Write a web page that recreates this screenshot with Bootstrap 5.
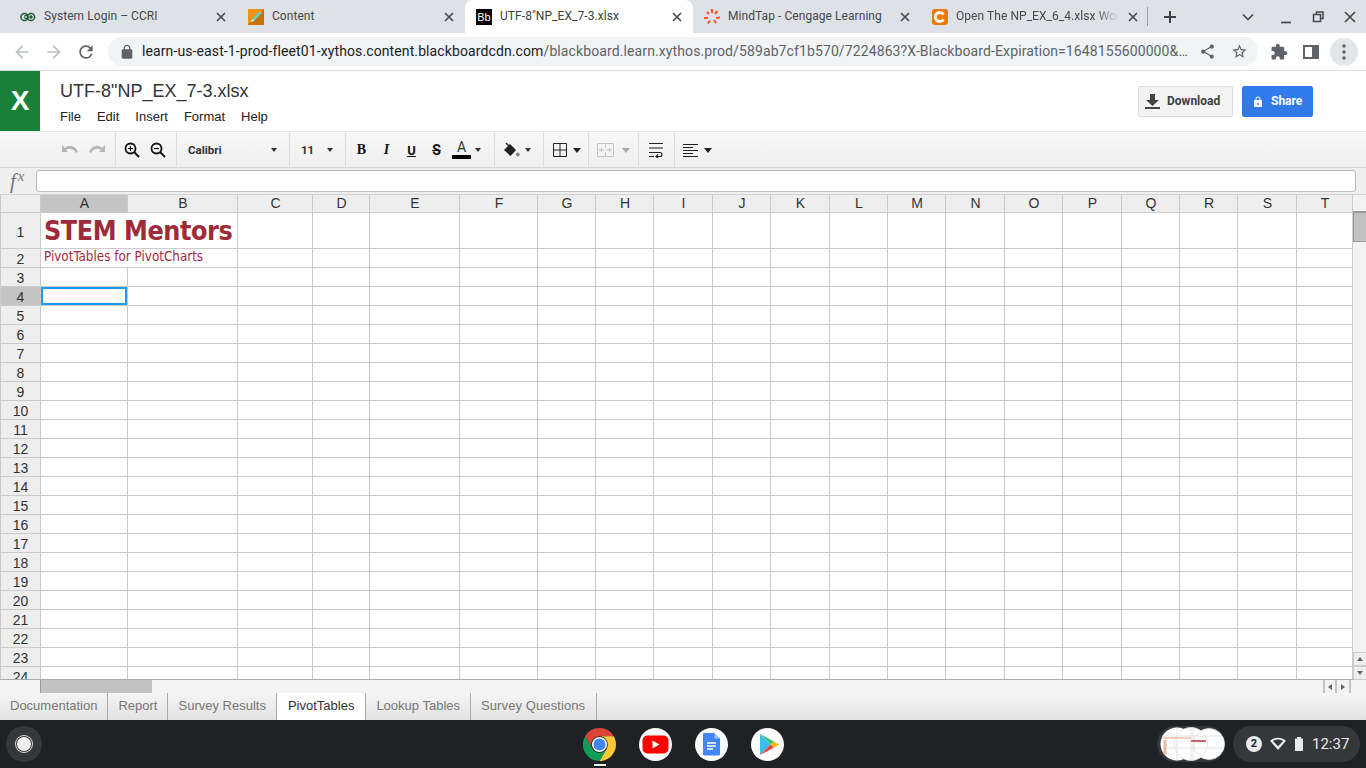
<!DOCTYPE html>
<html lang="en"><head><meta charset="utf-8"><title>UTF-8"NP_EX_7-3.xlsx</title>
<link href="https://cdn.jsdelivr.net/npm/bootstrap@5.3.0/dist/css/bootstrap.min.css" rel="stylesheet">
<style>
html,body{height:768px;overflow:hidden;background:#fff;font-family:"Liberation Sans",Arial,sans-serif}
.tabstrip{height:33px;background:#dee1e6;padding-left:9px;font:12px Roboto,sans-serif;color:#45484d;letter-spacing:.06px}
.ctab{width:228px;height:33px;padding:0 8px 0 11px;gap:8px;position:relative;white-space:nowrap;overflow:hidden}
.ctab+.ctab::before{content:"";position:absolute;left:-1px;top:7px;height:19px;border-left:1px solid #9aa0a6}
.ctab.live{background:#fff;border-radius:8px 8px 0 0;color:#3c4043}
.ctab.live::before,.ctab.live+.ctab::before{display:none}
.ctitle{flex:1;overflow:hidden;white-space:nowrap;padding-bottom:2px}
.fade-tail{-webkit-mask-image:linear-gradient(90deg,#000 85%,transparent)}
.favi{width:16px;height:16px;flex:none;display:block}
.bbi{width:16px;height:16px;flex:none;background:#000;color:#fff;font:11px/16px "Liberation Sans",sans-serif;text-align:center}
.tabx{width:12px;height:12px;flex:none;margin-right:2px}
.winctl{width:217px;height:33px;padding-left:13px;position:relative}
.winctl::before{content:"";position:absolute;left:-2px;top:7px;height:19px;border-left:1px solid #9aa0a6}
.plus{width:16px;height:16px;margin-right:63px}
.wbtn{width:32px;text-align:center;line-height:14px}
.wico{width:14px;height:14px;display:inline-block}
.chev{margin-right:15px}
.addr{height:38px;background:#fff;border-bottom:1px solid #dadce0;padding-left:12px}
.navb{width:20px;height:20px;margin-right:12px;fill:#5f6368}
.navb.off{fill:#bcc0c4}
.omni{width:1150px;height:29px;border-radius:15px;background:#f1f3f4;padding:0 10px 0 11px;font:14px Roboto,sans-serif;color:#202124;white-space:nowrap;overflow:hidden}
.omni .path{color:#5f6368}
.url{flex:1;overflow:hidden;margin-left:7px;letter-spacing:.108px;padding-bottom:2px}
.i16{width:17px;height:17px;flex:none;fill:#5f6368}
.omni .i16+.i16{margin-left:15px}
.lk{width:16px;height:16px;fill:#5f6368;flex:none}
.ext{width:18px;height:18px;fill:#5f6368;margin-left:12px;flex:none}
.ext2{width:18px;height:18px;margin-left:14px;flex:none}
.dotsb{width:28px;height:28px;border-radius:50%;background:#e4e5e6;margin-left:10px;flex:none}
.apphead{height:60px}
.xlogo{width:40px;height:60px;background:#188038;color:#fff;font:bold 28px "Liberation Sans",sans-serif}
.docname{font-size:18px;line-height:22px;color:#333;padding-top:9px;height:34px}
.menus{font-size:13px;line-height:18px;color:#222;gap:16px;padding-top:3px}
.docmain{padding-left:20px;flex:1}
.acts{padding:15px 53px 0 0;gap:9px}
.bdl,.bsh{height:31px;border-radius:2px;font:bold 12px Roboto,sans-serif;padding:0 0 2px;gap:7px}
.bdl svg,.bsh svg{margin-top:2px}
.bdl{width:95px;background:#f3f3f3;border:1px solid #dcdcdc;color:#3c4043;padding-left:5px}
.bdl span{margin-left:-1px}
.bsh{width:71px;background:linear-gradient(#2f7cf0,#3179e4);border:1px solid #2f7bea;color:#fff;padding-left:9px}
.bdl:hover,.bsh:hover{color:inherit}
.tools{height:37px;background:linear-gradient(#f8f8f8,#efefef);border-top:1px solid #e6e6e6;border-bottom:1px solid #d4d4d4;color:#222}
.tg{height:36px;border-right:1px solid #dcdcdc;flex:none;position:relative}
.tg svg{display:block;flex:none}
.g1{width:116px;padding-left:62px;gap:11px}.g2{width:61px;padding-left:8px;gap:10px}
.g3{width:113px;padding:0 12px 0 11px;font:bold 11.5px Roboto,sans-serif;color:#333}
.g4{width:56px;padding:0 12px 0 11px;font:bold 11.5px Roboto,sans-serif;color:#333}
.g5{width:149px;padding-left:3px;gap:0}.g6{width:49px;padding-left:8px;gap:5px}
.g7{width:45px;padding-left:9px;gap:6px}.g8{width:50px;padding-left:8px;gap:8px}
.g9{width:36px;padding-left:9px}.g10{width:52px;padding-left:8px;gap:6px;border-right:0}
.fm{width:25px;text-align:center;font-size:14px;line-height:20px;color:#111}
.fb{font:bold 14px "Liberation Serif",serif}.fi{font:italic bold 14px "Liberation Serif",serif}
.fu{text-decoration:underline;font:bold 13px Roboto,sans-serif}.fs{text-decoration:line-through;font:bold 14px Roboto,sans-serif}
.fa{width:19px;font:14px/13px Roboto,sans-serif;border-bottom:4px solid #000;color:#333;text-align:center;height:18px;margin-left:3px}
.caret1{width:0;height:0;border:3px solid transparent;border-top:4px solid #333;border-bottom:0;flex:none}
.caret2{width:0;height:0;border:4px solid transparent;border-top:5px solid #222;border-bottom:0;flex:none}
.caret3{border-top-color:#aaa}
.g5 .caret1{margin-left:4px}
.formula{height:27px;background:#efefef;padding:2px 10px 3px 0;border-bottom:1px solid #d4d4d4}
.fx{width:36px;padding-left:10px;font:italic 21px/20px "Liberation Serif",serif;color:#777;white-space:nowrap}
.fx sup{font-size:15px;top:-.42em;vertical-align:baseline;position:relative;margin-left:2px}
.fbox{flex:1;height:22px;background:#fff;border:1px solid #bbb;border-radius:3px}
.sheetarea{height:485px;overflow:hidden}
.gridwrap{width:1353px;height:485px;overflow:hidden;flex:none;border-bottom:1px solid #aaa}
.sheet{table-layout:fixed;width:1353px;border-collapse:separate;border-spacing:0;font:14px "Liberation Sans",sans-serif;color:#333}
.sheet td,.sheet th{height:19px;padding:0;border-right:1px solid #cbcbcb;border-bottom:1px solid #cbcbcb;background:#fff;font-weight:400;line-height:17px;text-align:center;overflow:hidden;white-space:nowrap}
.sheet thead th{height:18px;background:#eee;padding-left:1px}
.sheet tbody th{background:#eee;padding-top:2px;line-height:16px}
.sheet tr>th:first-child{border-left:1px solid #cbcbcb}
.sheet .cursel{background:#c4c4c4}
.sheet .r1>*{height:36px}
.sheet td.ttl{text-align:left;padding:1px 0 0 3px;font:bold 26.67px "DejaVu Sans Condensed","DejaVu Sans",sans-serif;letter-spacing:-.43px;color:#9e2b3a;line-height:34px}
.sheet td.sub{text-align:left;padding:0 0 2px 3px;font:13.33px "DejaVu Sans Condensed","DejaVu Sans",sans-serif;color:#a52a3e;line-height:16px}
.sheet td.active{box-shadow:inset 0 0 0 2px #1a9bf0}
.vbar{flex:1;background:#f3f3f3;height:485px}
.vhead{height:16px}
.vthumb{height:31px;background:#c2c2c2;border:1px solid #999;border-top-width:2px;border-right:0}
.vbtn{height:14px;background:#eee;border:1px solid #ccc;border-right:0}
.vup{margin-top:-1px}
.hbar{height:13px;background:#f3f3f3;padding-left:40px}
.hthumb{width:112px;height:13px;background:#c2c2c2;border-left:1px solid #999}
.hbtn{width:14px;height:13px;border-left:2px solid #c4c4c4;border-right:2px solid #c4c4c4;margin-right:0}
.hbtn+.hbtn{border-left:0;margin-left:0}
.hbtns{margin:0 15px 0 auto}
.tri{width:0;height:0;border:3px solid transparent}
.tl{border-right:4px solid #666;border-left:0}.tr{border-left:4px solid #666;border-right:0}
.tu{border-bottom:4px solid #666;border-top:0}.td{border-top:4px solid #666;border-bottom:0}
.sheets{height:27px;background:linear-gradient(#f5f5f5,#e2e2e2);font-size:13px;color:#777}
.stab{padding:0 10px;height:27px;line-height:25px;border-right:1px solid #aaa;white-space:nowrap}
.stab.on{background:#fff;color:#333;padding:0 11px}
.stab:last-child{letter-spacing:.1px;padding-right:11px}
.shelf{height:48px;background:#202124;position:relative}
.launch{width:36px;height:36px;border-radius:50%;background:#36373a;margin-left:6px}
.launchin{width:14px;height:14px;border-radius:50%;background:#eee;box-shadow:0 0 0 1px #36373a,0 0 0 2px #ddd}
.apps{position:absolute;left:583px;top:8px;gap:23px}
.appi{width:33px;height:33px;display:block;flex:none}
.runline{position:absolute;left:594px;top:44px;width:12px;height:2px;background:#e8eaed}
.thumbs{position:absolute;left:1157px;top:6px;width:68px;height:36px;border-radius:18px;background:#36373a}
.thumbs svg{display:block}
.status{position:absolute;left:1233px;top:6px;width:127px;height:36px;border-radius:18px;background:#36373a;color:#e8eaed;font:15px Roboto,sans-serif;padding-left:13px}
.nbadge{width:16px;height:16px;border-radius:50%;background:#e8eaed;color:#202124;font:bold 11px/16px Roboto,sans-serif;text-align:center}
.wifi{width:16px;height:16px;margin-left:8px;fill:#e8eaed}
.batt{width:16px;height:16px;margin-left:5px;fill:#e8eaed}
.clock{margin-left:5px}
</style></head>
<body class="d-flex flex-column">

<div class="tabstrip d-flex align-items-center">
 <div class="ctab d-flex align-items-center">
  <svg class="favi" viewBox="0 0 16 16" fill="none" stroke="#1f5c36" stroke-width="1.5"><circle cx="4.500" cy="8" r="3.600"/><circle cx="11" cy="8" r="3.600"/><circle cx="11" cy="8" r="1" fill="#1f5c36"/><path d="M7.800 6.500h-3v3h3" stroke-width="1"/></svg>
  <span class="ctitle">System Login – CCRI</span>
  <svg class="tabx" viewBox="0 0 12 12" stroke="#45484d" stroke-width="1.6"><path d="M2 2l8 8M10 2l-8 8"/></svg>
 </div>
 <div class="ctab d-flex align-items-center">
  <svg class="favi" viewBox="0 0 16 16"><rect width="16" height="16" fill="#f0930f"/><path d="M0 16L16 0v16z" fill="#c96f0a"/><path d="M3 13l1-3 7-7 2 2-7 7z" fill="#5fd3c6"/><path d="M3 13l1-3 2 2z" fill="#fbe7b5"/><path d="M11 3l1-1 2 2-1 1z" fill="#f39ab1"/></svg>
  <span class="ctitle">Content</span>
  <svg class="tabx" viewBox="0 0 12 12" stroke="#45484d" stroke-width="1.6"><path d="M2 2l8 8M10 2l-8 8"/></svg>
 </div>
 <div class="ctab live d-flex align-items-center">
  <span class="bbi">Bb</span>
  <span class="ctitle">UTF-8"NP_EX_7-3.xlsx</span>
  <svg class="tabx" viewBox="0 0 12 12" stroke="#45484d" stroke-width="1.6"><path d="M2 2l8 8M10 2l-8 8"/></svg>
 </div>
 <div class="ctab d-flex align-items-center">
  <svg class="favi" viewBox="0 0 16 16" fill="none" stroke="#ee5a33" stroke-width="2.2"><path d="M8 0v4M13.500 2L11 5M16 8.500l-4 .5M12 14l-2-3M4 14.500l2-3M0 9h4M3 3l2 2"/></svg>
  <span class="ctitle">MindTap - Cengage Learning</span>
  <svg class="tabx" viewBox="0 0 12 12" stroke="#45484d" stroke-width="1.6"><path d="M2 2l8 8M10 2l-8 8"/></svg>
 </div>
 <div class="ctab d-flex align-items-center">
  <svg class="favi" viewBox="0 0 16 16"><rect width="16" height="16" rx="3" fill="#ee7a06"/><path d="M11.500 10.500A4.500 4.500 0 1 1 11.500 5.500" fill="none" stroke="#fff" stroke-width="2.800"/></svg>
  <span class="ctitle fade-tail">Open The NP_EX_6_4.xlsx Work</span>
  <svg class="tabx" viewBox="0 0 12 12" stroke="#45484d" stroke-width="1.6"><path d="M2 2l8 8M10 2l-8 8"/></svg>
 </div>
 <div class="winctl d-flex align-items-center">
  <svg class="plus" viewBox="0 0 16 16" stroke="#3c4043" stroke-width="2"><path d="M8 2v12M2 8h12"/></svg>
  <svg class="wico chev" viewBox="0 0 14 14" fill="none" stroke="#45484d" stroke-width="1.700"><path d="M2 4.500l5 5 5-5"/></svg>
  <span class="wbtn"><svg class="wico" viewBox="0 0 14 14" stroke="#45484d" stroke-width="1.700"><path d="M2 12.500h10"/></svg></span>
  <span class="wbtn"><svg class="wico" viewBox="0 0 14 14" fill="none" stroke="#45484d" stroke-width="1.500"><path d="M5.500 4V2h6.500v6.500H9.500"/><rect x="2.500" y="4.500" width="7" height="7"/></svg></span>
  <span class="wbtn"><svg class="wico" viewBox="0 0 14 14" stroke="#45484d" stroke-width="1.700"><path d="M2 2l10 10M12 2L2 12"/></svg></span>
 </div>
</div>

<div class="addr d-flex align-items-center">
 <svg class="navb off" viewBox="0 0 24 24"><path d="M20 11H7.830l5.590-5.590L12 4l-8 8 8 8 1.410-1.410L7.830 13H20v-2z"/></svg>
 <svg class="navb off" viewBox="0 0 24 24"><path d="M4 11h12.170l-5.590-5.590L12 4l8 8-8 8-1.410-1.410L16.170 13H4v-2z"/></svg>
 <svg class="navb" viewBox="0 0 24 24"><path d="M17.650 6.350A7.958 7.958 0 0 0 12 4c-4.420 0-7.990 3.580-7.990 8s3.570 8 7.990 8c3.730 0 6.840-2.550 7.730-6h-2.080A5.990 5.990 0 0 1 12 18c-3.310 0-6-2.690-6-6s2.690-6 6-6c1.660 0 3.140.690 4.220 1.780L13 11h7V4l-2.350 2.350z"/></svg>
 <div class="omni d-flex align-items-center">
  <svg class="lk" viewBox="0 0 24 24"><path d="M18 8h-1V6c0-2.760-2.240-5-5-5S7 3.240 7 6v2H6c-1.100 0-2 .9-2 2v10c0 1.100.9 2 2 2h12c1.100 0 2-.9 2-2V10c0-1.100-.9-2-2-2zM9 6c0-1.660 1.340-3 3-3s3 1.340 3 3v2H9V6z"/></svg>
  <span class="url">learn-us-east-1-prod-fleet01-xythos.content.blackboardcdn.com<span class="path">/blackboard.learn.xythos.prod/589ab7cf1b570/7224863?X-Blackboard-Expiration=1648155600000&amp;…</span></span>
  <svg class="i16" viewBox="0 0 24 24"><path d="M18 16.080c-.760 0-1.440.3-1.960.770L8.910 12.700c.05-.23.09-.46.09-.7s-.04-.47-.09-.7l7.050-4.110c.54.5 1.250.810 2.040.810 1.660 0 3-1.340 3-3s-1.340-3-3-3-3 1.340-3 3c0 .24.04.47.09.7L8.040 9.810C7.500 9.310 6.790 9 6 9c-1.660 0-3 1.340-3 3s1.340 3 3 3c.79 0 1.500-.31 2.040-.81l7.120 4.160c-.05.21-.08.43-.08.65 0 1.610 1.310 2.920 2.920 2.920s2.920-1.310 2.920-2.920-1.310-2.920-2.920-2.920z"/></svg>
  <svg class="i16" viewBox="0 0 24 24"><path d="M22 9.240l-7.190-.62L12 2 9.190 8.630 2 9.240l5.460 4.730L5.820 21 12 17.270 18.180 21l-1.630-7.030L22 9.240zM12 15.400l-3.760 2.270 1-4.280-3.320-2.880 4.380-.38L12 6.100l1.710 4.040 4.380.38-3.320 2.880 1 4.280L12 15.400z"/></svg>
 </div>
 <svg class="ext" viewBox="0 0 24 24"><path d="M20.500 11H19V7c0-1.100-.9-2-2-2h-4V3.500C13 2.120 11.880 1 10.500 1S8 2.120 8 3.500V5H4c-1.100 0-1.990.9-1.990 2v3.800H3.500c1.490 0 2.700 1.210 2.700 2.700s-1.210 2.700-2.700 2.700H2V20c0 1.100.9 2 2 2h3.800v-1.500c0-1.490 1.210-2.700 2.700-2.700 1.490 0 2.700 1.210 2.700 2.700V22H17c1.100 0 2-.9 2-2v-4h1.500c1.380 0 2.500-1.120 2.500-2.500S21.880 11 20.500 11z"/></svg>
 <svg class="ext2" viewBox="0 0 18 18"><path d="M2 3h14v12H2z" fill="none" stroke="#5f6368" stroke-width="2"/><path d="M10 3h6v12h-6z" fill="#5f6368"/></svg>
 <div class="dotsb d-flex align-items-center justify-content-center"><svg width="4" height="16" viewBox="0 0 4 16" fill="#5f6368"><circle cx="2" cy="2" r="1.700"/><circle cx="2" cy="8" r="1.700"/><circle cx="2" cy="14" r="1.700"/></svg></div>
</div>

<div class="apphead d-flex">
 <div class="xlogo d-flex align-items-center justify-content-center">X</div>
 <div class="docmain">
  <div class="docname">UTF-8"NP_EX_7-3.xlsx</div>
  <div class="menus d-flex"><span>File</span><span>Edit</span><span>Insert</span><span>Format</span><span>Help</span></div>
 </div>
 <div class="acts d-flex align-items-start">
  <button class="btn bdl d-flex align-items-center justify-content-start"><svg width="17" height="15" viewBox="0 0 17 15" fill="#444"><path d="M6 0h5v6h4l-6.500 6L2 6h4zM1 13h15v2H1z"/></svg><span>Download</span></button>
  <button class="btn bsh d-flex align-items-center justify-content-start"><svg width="12" height="14" viewBox="0 0 24 24" fill="#fff"><path d="M18 8h-1V6c0-2.760-2.240-5-5-5S7 3.240 7 6v2H6c-1.100 0-2 .9-2 2v10c0 1.100.9 2 2 2h12c1.100 0 2-.9 2-2V10c0-1.100-.9-2-2-2zM9 6c0-1.660 1.340-3 3-3s3 1.340 3 3v2H9V6zm3 12a2 2 0 1 1 0-4 2 2 0 0 1 0 4z"/></svg>Share</button>
 </div>
</div>

<div class="tools d-flex">
 <div class="tg g1 d-flex align-items-center">
  <svg width="16" height="10" viewBox="0 0 16 10" fill="#b5b5b5"><path d="M0 0v7h6L4 5c3-2 7-2 10 3l2-1C13 0 7-1 3 3z"/></svg>
  <svg width="16" height="10" viewBox="0 0 16 10" fill="#b5b5b5"><path d="M16 0v7h-6l2-2C9 3 5 3 2 8L0 7c3-7 9-8 13-4z"/></svg>
 </div>
 <div class="tg g2 d-flex align-items-center">
  <svg width="16" height="16" viewBox="0 0 16 16" fill="none" stroke="#111" stroke-width="1.800"><circle cx="6.500" cy="6.500" r="5"/><path d="M10 10l5 5"/><path d="M4 6.500h5M6.500 4v5" stroke-width="1.200"/></svg>
  <svg width="16" height="16" viewBox="0 0 16 16" fill="none" stroke="#111" stroke-width="1.800"><circle cx="6.500" cy="6.500" r="5"/><path d="M10 10l5 5"/><path d="M4 6.500h5" stroke-width="1.200"/></svg>
 </div>
 <div class="tg g3 d-flex align-items-center justify-content-between"><span>Calibri</span><i class="caret1"></i></div>
 <div class="tg g4 d-flex align-items-center justify-content-between"><span>11</span><i class="caret1"></i></div>
 <div class="tg g5 d-flex align-items-center">
  <span class="fm fb">B</span><span class="fm fi">I</span><span class="fm fu">U</span><span class="fm fs">S</span><span class="fa">A</span><i class="caret1"></i>
 </div>
 <div class="tg g6 d-flex align-items-center">
  <svg width="17" height="16" viewBox="0 0 17 16"><path d="M7 2l6 6-5.500 6L1 8z" fill="#222"/><path d="M3 1l3 3" stroke="#222" stroke-width="1.400"/><circle cx="14.800" cy="12.500" r="1.900" fill="#888"/></svg><i class="caret1"></i>
 </div>
 <div class="tg g7 d-flex align-items-center">
  <svg width="14" height="14" viewBox="0 0 14 14" fill="none" stroke="#222"><path d="M.5.5h13v13H.5zM7 .5v13M.5 7h13"/></svg><i class="caret2"></i>
 </div>
 <div class="tg g8 d-flex align-items-center">
  <svg width="17" height="14" viewBox="0 0 17 14" fill="none" stroke="#c4c4c4"><path d="M.5.5h16v13H.5zM8.500 .5v4M8.500 9.500v4M2 7h5M10 7h5M4.500 5v4M12.500 5v4"/></svg><i class="caret2 caret3"></i>
 </div>
 <div class="tg g9 d-flex align-items-center">
  <svg width="16" height="16" viewBox="0 0 16 16" fill="none" stroke="#222" stroke-width="1.200"><path d="M1 1.500h14M1 6h14M1 10.500h11a2 2 0 0 1 0 4H9M1 14.500h5"/><path d="M10 12.500l-2 2 2 1.500" /></svg>
 </div>
 <div class="tg g10 d-flex align-items-center">
  <svg width="15" height="13" viewBox="0 0 15 13" fill="none" stroke="#222"><path d="M0 .5h15M0 3.500h10M0 6.500h15M0 9.500h10M0 12.500h15"/></svg><i class="caret2"></i>
 </div>
</div>

<div class="formula d-flex align-items-center">
 <div class="fx">f<sup>x</sup></div><div class="fbox"></div>
</div>

<div class="sheetarea d-flex">
 <div class="gridwrap"><table class="sheet" id="sheet"></table></div>
 <div class="vbar d-flex flex-column">
  <div class="vhead"></div><div class="vthumb"></div><div class="flex-grow-1"></div>
  <div class="vbtn vup d-flex align-items-center justify-content-center"><i class="tri tu"></i></div>
  <div class="vbtn d-flex align-items-center justify-content-center"><i class="tri td"></i></div>
 </div>
</div>
<div class="hbar d-flex">
 <div class="hthumb"></div>
 <div class="hbtns d-flex">
  <div class="hbtn d-flex align-items-center justify-content-center"><i class="tri tl"></i></div>
  <div class="hbtn d-flex align-items-center justify-content-center"><i class="tri tr"></i></div>
 </div>
</div>
<div class="sheets d-flex">
 <div class="stab">Documentation</div><div class="stab">Report</div><div class="stab">Survey Results</div><div class="stab on">PivotTables</div><div class="stab">Lookup Tables</div><div class="stab">Survey Questions</div>
</div>

<div class="shelf d-flex align-items-center">
 <div class="launch d-flex align-items-center justify-content-center"><div class="launchin"></div></div>
 <div class="apps d-flex">
  <svg class="appi" viewBox="0 0 24 24"><path d="M12 0A12 12 0 0 1 22.390 6H12A6 6 0 0 0 6.800 15L1.600 6A12 12 0 0 1 12 0Z" fill="#db4437"/><path d="M22.390 6A12 12 0 0 1 12 24L17.200 15A6 6 0 0 0 12 6Z" fill="#fcc934"/><path d="M1.600 6A12 12 0 0 0 12 24L17.200 15A6 6 0 0 1 6.800 15Z" fill="#0f9d58"/><circle cx="12" cy="12" r="5.500" fill="#fff"/><circle cx="12" cy="12" r="4.400" fill="#4285f4"/></svg>
  <svg class="appi" viewBox="0 0 33 33"><circle cx="16.500" cy="16.500" r="16.500" fill="#fff"/><rect x="3.500" y="7.500" width="26" height="18" rx="5" fill="#f00"/><path d="M13.500 12.500l7 4-7 4z" fill="#fff"/></svg>
  <svg class="appi" viewBox="0 0 33 33"><circle cx="16.500" cy="16.500" r="16.500" fill="#fff"/><path d="M9 5h10.500l5.500 5.500V26a1.500 1.500 0 0 1-1.500 1.500h-14A1.500 1.500 0 0 1 8 26V6.500A1.500 1.500 0 0 1 9 5z" fill="#4285f4"/><path d="M19.500 5l5.500 5.500h-5.500z" fill="#a1c2fa"/><path d="M12 15h9M12 18h9M12 21h6" stroke="#fff" stroke-width="1.500"/></svg>
  <svg class="appi" viewBox="0 0 33 33"><circle cx="16.500" cy="16.500" r="16.500" fill="#fff"/><path d="M9 6v21l10.500-10.500z" fill="#3bbdf2"/><path d="M9 6l14 7.500-3.500 3z" fill="#36c777"/><path d="M9 27l14-7.500-3.500-3z" fill="#ea4335"/><path d="M23 13.500l5 3-5 3-3.500-3z" fill="#fbbc04"/></svg>
 </div>
 <div class="runline"></div>
 <div class="thumbs"><svg width="68" height="36" viewBox="0 0 68 36"><circle cx="20" cy="18" r="16.500" fill="#fff"/><circle cx="34" cy="18" r="16.500" fill="#fff"/><circle cx="52" cy="18" r="15.500" fill="#fff"/><path d="M20 1.500v33M34 1.500v33M36 1.500v33M5 10h60M5 22h60" stroke="#dadada" stroke-width=".8" fill="none"/><circle cx="34" cy="18" r="16.500" fill="none" stroke="#e0e0e0" stroke-width=".8"/><circle cx="52" cy="18" r="15.500" fill="none" stroke="#e0e0e0" stroke-width=".8"/><path d="M34 15h15" stroke="#b9303a" stroke-width="1.500"/><path d="M6 12h28" stroke="#e8a070" stroke-width="1"/><path d="M8 14v14" stroke="#e7b9a0" stroke-width="3"/></svg></div>
 <div class="status d-flex align-items-center">
  <span class="nbadge">2</span>
  <svg class="wifi" viewBox="0 0 24 24"><path d="M12 21L0 7c7-6 17-6 24 0zM12 15.500L19.500 7.500C15 4.500 9 4.500 4.500 7.500z" fill-rule="evenodd"/></svg>
  <svg class="batt" viewBox="0 0 16 16"><path d="M6 1h4v1.500h2V15H4V2.500h2z"/></svg>
  <span class="clock">12:37</span>
 </div>
</div>

<script>
(function(){
 var w=[41,87,110,75,57,90,78,58,58,59,58,59,58,58,59,58,59,58,58,59,56];
 var L="ABCDEFGHIJKLMNOPQRST".split("");
 var h='<colgroup>'+w.map(function(x){return '<col width="'+x+'">'}).join('')+'</colgroup><thead><tr><th></th>';
 L.forEach(function(c,i){h+='<th class="'+(i==0?'cursel':'')+'">'+c+'</th>'});
 h+='</tr></thead><tbody>';
 for(var r=1;r<=24;r++){
  h+='<tr'+(r==1?' class="r1"':'')+'><th'+(r==4?' class="cursel"':'')+'>'+r+'</th>';
  if(r==1){h+='<td colspan="2" class="ttl">STEM Mentors</td>'}
  else if(r==2){h+='<td colspan="2" class="sub">PivotTables for PivotCharts</td>'}
  for(var c=(r<=2?2:0);c<20;c++){h+='<td'+(r==4&&c==0?' class="active"':'')+'></td>'}
  h+='</tr>';
 }
 document.getElementById('sheet').innerHTML=h+'</tbody>';
})();
</script>
<script src="https://cdn.jsdelivr.net/npm/bootstrap@5.3.0/dist/js/bootstrap.bundle.min.js"></script>
</body></html>
